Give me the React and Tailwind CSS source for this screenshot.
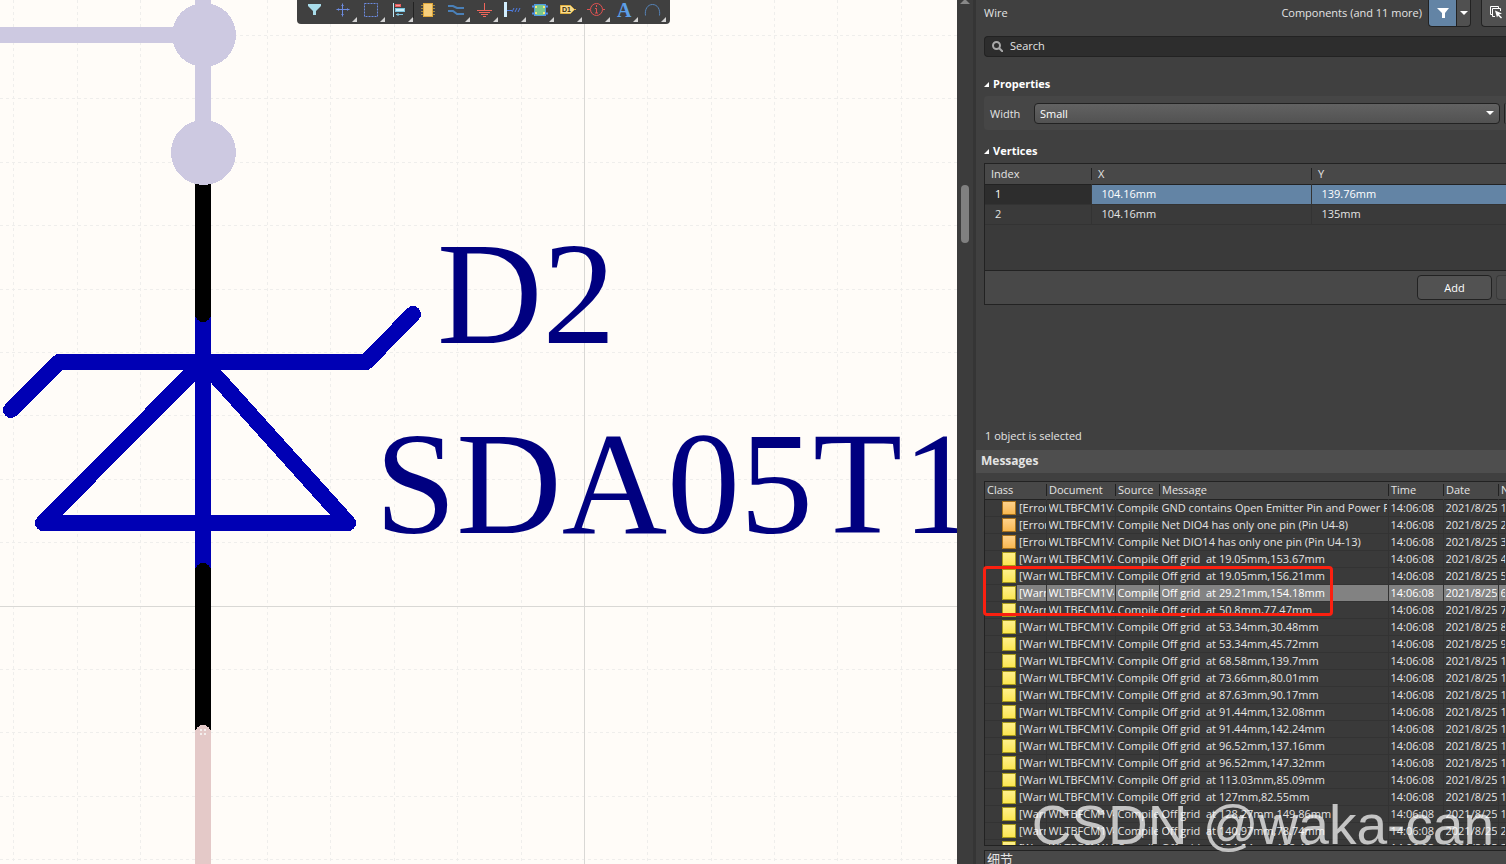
import React from 'react';

const GRID_X = [13, 77, 140, 204, 267, 330, 394, 457, 521, 647, 711, 774, 837, 901];
const GRID_Y = [35, 98, 162, 225, 289, 352, 415, 479, 542, 669, 732, 796, 859];

const VERTICES = [
  { index: 1, x: '104.16mm', y: '139.76mm' },
  { index: 2, x: '104.16mm', y: '135mm' },
];

const ERRORS = [
  'GND contains Open Emitter Pin and Power Pin',
  'Net DIO4 has only one pin (Pin U4-8)',
  'Net DIO14 has only one pin (Pin U4-13)',
];

const OFF_GRID = [
  '19.05mm,153.67mm',
  '19.05mm,156.21mm',
  '29.21mm,154.18mm',
  '50.8mm,77.47mm',
  '53.34mm,30.48mm',
  '53.34mm,45.72mm',
  '68.58mm,139.7mm',
  '73.66mm,80.01mm',
  '87.63mm,90.17mm',
  '91.44mm,132.08mm',
  '91.44mm,142.24mm',
  '96.52mm,137.16mm',
  '96.52mm,147.32mm',
  '113.03mm,85.09mm',
  '127mm,82.55mm',
  '128.27mm,149.86mm',
  '140.97mm,78.74mm',
  '154.94mm,138.43mm',
];

const MESSAGES = [
  ...ERRORS.map((text) => ({ kind: 'error', text })),
  ...OFF_GRID.map((at) => ({ kind: 'warning', text: `Off grid  at ${at}` })),
];

const SELECTED_MESSAGE = 5;

const TOOLS = [
  {
    name: 'Filter',
    icon: <path d="M3 4h13v2l-5 5v4H8v-4L3 6z" fill="#a9dcea" />,
  },
  {
    name: 'Move',
    menu: true,
    icon: (
      <g stroke="#6c8be0" fill="none">
        <path d="M9.500 3.500v13M3.500 9.500h13" />
        <path d="M8 5.500h3M8 14.500h3M5.500 8v3M14.500 8v3" strokeOpacity=".6" />
      </g>
    ),
  },
  {
    name: 'Select area',
    menu: true,
    icon: <rect x="3.500" y="3.500" width="13" height="13" fill="none" stroke="#6c8be0" strokeDasharray="2 1" />,
  },
  {
    name: 'Align',
    menu: true,
    icon: (
      <g>
        <path d="M4.500 3v14" stroke="#c5ecf8" />
        <rect x="6.500" y="4.500" width="5" height="2" fill="#f29a9a" stroke="#e85c5c" />
        <rect x="6.500" y="8.500" width="9" height="3" fill="#c5ecf8" stroke="#7cc4e0" />
        <path d="M7 14.500h7M9 13v3" stroke="#7cc4e0" fill="none" />
      </g>
    ),
  },
  {
    name: 'Place part',
    icon: (
      <g>
        <path d="M3 5.500h14M3 8.500h14M3 11.500h14M3 14.500h14" stroke="#a88a3c" />
        <rect x="5.500" y="3.500" width="9" height="13" fill="#f7cf7c" stroke="#e0a83c" />
      </g>
    ),
  },
  {
    name: 'Place wire',
    menu: true,
    icon: (
      <g fill="none" stroke="#4a80b8" strokeWidth="2">
        <path d="M2 6h5l4 2h7" />
        <path d="M2 11h5l4 3h7" />
      </g>
    ),
  },
  {
    name: 'Place GND power port',
    menu: true,
    icon: (
      <path d="M10.500 3v8M3 10.500h15M5 12.500h11M7 14.500h7M9 16.500h3" stroke="#f0655a" fill="none" />
    ),
  },
  {
    name: 'Place harness',
    menu: true,
    icon: (
      <g fill="none">
        <path d="M3.500 2v15" stroke="#d3efff" strokeWidth="3" />
        <path d="M5 10.500h5M10 12l2-4M13 12l2-4M16 12l2-4" stroke="#4f7fe8" />
      </g>
    ),
  },
  {
    name: 'Place sheet symbol',
    menu: true,
    icon: (
      <g>
        <rect x="4.500" y="4.500" width="11" height="11" fill="#7cc98c" stroke="#4f9be0" />
        <path d="M2 6.500h4M2 13.500h4M14 6.500h4M14 13.500h4" stroke="#4f8fe8" strokeWidth="2" />
        <path d="M5 6h2v2H5zM5 12h2v2H5zM13 6h2v2h-2zM13 12h2v2h-2z" fill="#f5e878" />
      </g>
    ),
  },
  {
    name: 'Place designator',
    menu: true,
    icon: (
      <g>
        <path d="M2.500 5.500h10l4 4-4 4h-10z" fill="#f8dc8e" stroke="#e0b040" />
        <path d="M16 9.500h2" stroke="#e0b040" />
        <text x="4" y="12" fill="#3a2c10" className="font-['Liberation_Sans'] text-[7px] font-bold">D1</text>
      </g>
    ),
  },
  {
    name: 'Place directive',
    menu: true,
    icon: (
      <g fill="none" stroke="#e05252">
        <circle cx="10.500" cy="9.500" r="6" />
        <path d="M1 9.500h3M17 9.500h2" />
        <path d="M10.500 5v2M9 8.500h1.500V13M9 13h3" />
      </g>
    ),
  },
  {
    name: 'Place text',
    menu: true,
    icon: (
      <text x="3" y="17" fill="#5c9fe8" className="font-['Liberation_Serif'] text-[20px] font-bold">A</text>
    ),
  },
  {
    name: 'Place arc',
    menu: true,
    icon: <path d="M3.500 15.500c-1-6 2-11 7-11s8 5 7 11" fill="none" stroke="#5583b8" />,
  },
];

function Toolbar() {
  return (
    <div className="absolute top-0 left-[297px] flex h-6 rounded-b-sm bg-[#404040] px-1">
      {TOOLS.map((tool, i) => (
        <React.Fragment key={tool.name}>
          {i === 4 && <span className="mt-0.5 h-4 w-px bg-[#222]" />}
          <button type="button" aria-label={tool.name} className="relative h-6 w-7 px-1 pb-1">
            <svg width="20" height="20" viewBox="0 0 20 20">
              {tool.icon}
            </svg>
            {tool.menu && (
              <svg className="absolute right-0 bottom-[2px]" width="5" height="5" viewBox="0 0 5 5">
                <path d="M5 0v5H0z" fill="#d4d4d4" />
              </svg>
            )}
          </button>
        </React.Fragment>
      ))}
    </div>
  );
}

function Schematic() {
  return (
    <svg className="block h-full w-full" shapeRendering="crispEdges">
      {/* sheet grid */}
      <g stroke="#efeeec" strokeDasharray="3 3">
        {GRID_X.map((x) => (
          <line key={x} x1={x + 0.5} x2={x + 0.5} y1="0" y2="100%" />
        ))}
        {GRID_Y.map((y) => (
          <line key={y} x1="0" x2="100%" y1={y + 0.5} y2={y + 0.5} />
        ))}
      </g>
      <g stroke="#d9d8d5">
        <line x1="584.500" x2="584.500" y1="0" y2="100%" />
        <line x1="0" x2="100%" y1="606.500" y2="606.500" />
      </g>

      {/* dimmed net and junctions */}
      <g fill="#cdc9e1" stroke="none">
        <rect x="0" y="27" width="203" height="16" />
        <rect x="195" y="0" width="16" height="153" />
        <circle cx="204" cy="35" r="32" />
      </g>

      {/* TVS diode */}
      <g fill="none" stroke="#0000b4" strokeWidth="16" strokeLinecap="round" strokeLinejoin="round">
        <path d="M11 410L59 362H366L413 314" />
        <path d="M203 362L43 523H348Z" />
        <path d="M203 318V568" />
      </g>
      <g stroke="#000" strokeWidth="16" strokeLinecap="round">
        <path d="M203 180V314" />
        <path d="M203 571V724" />
        <path d="M203 700V732" strokeLinecap="butt" />
      </g>
      <circle cx="203.500" cy="152.500" r="32.500" fill="#cdc9e1" />

      <line x1="203" x2="203" y1="733" y2="2000" stroke="#e4c9c8" strokeWidth="16" strokeLinecap="round" />
      <path d="M200 729h2v2h-2zM204 729h2v2h-2zM200 733h2v2h-2zM204 733h2v2h-2z" fill="#f4efee" />

      <g fill="#000080" className="font-['Liberation_Serif',serif] text-[146px]">
        <text x="437" y="343">D2</text>
        <text x="375" y="533">SDA05T1</text>
      </g>
    </svg>
  );
}

function SectionTitle({ children }) {
  return (
    <h2 className="flex h-5 items-center gap-1 font-bold text-white">
      <svg width="5" height="5" viewBox="0 0 5 5">
        <path d="M5 0v5H0z" fill="#fff" />
      </svg>
      {children}
    </h2>
  );
}

function Caret() {
  return (
    <svg width="8" height="4" viewBox="0 0 8 4">
      <path d="M0 0h8L4 4z" fill="#fff" />
    </svg>
  );
}

function PropertiesPanel() {
  return (
    <section className="flex h-[450px] shrink-0 flex-col pl-2">
      <div className="flex h-[26px] shrink-0 items-center">
        <span>Wire</span>
        <span className="ml-auto pr-1.5">Components (and 11 more)</span>
        <button
          type="button"
          aria-label="Filter"
          className="flex h-[27px] w-[29px] items-center justify-center rounded-bl-sm border border-t-0 border-[#222] bg-[#6384a5]"
        >
          <svg width="12" height="10" viewBox="0 0 12 10">
            <path d="M0 0h12L8 5v5H5V5z" fill="#fff" />
          </svg>
        </button>
        <button
          type="button"
          aria-label="Filter options"
          className="flex h-[27px] w-[14px] items-center justify-center rounded-br-sm border border-t-0 border-l-0 border-[#222] bg-[#505050]"
        >
          <Caret />
        </button>
        <button
          type="button"
          aria-label="Select"
          className="ml-[10px] flex h-[27px] w-[25px] items-center rounded-bl-sm border border-t-0 border-r-0 border-[#222] bg-[#505050] pl-2"
        >
          <svg width="13" height="13" viewBox="0 0 13 13" fill="none" stroke="#fff">
            <path d="M2 8.500H.500V.500h8V2" />
            <path d="M5 10.500H2.500v-8h8V5" />
            <path d="M5 4.500l7 3-3 1 3 3-1 1-3-3-1 2z" fill="#fff" stroke="none" />
          </svg>
        </button>
      </div>

      <label className="mt-[10px] flex h-[21px] shrink-0 items-center gap-[7px] rounded-l-sm border border-r-0 border-[#222] bg-[#2d2d2d] pl-[7px]">
        <svg width="11" height="11" viewBox="0 0 11 11" fill="none" stroke="#a8a8a8" strokeWidth="2">
          <circle cx="4.500" cy="4.500" r="3.500" />
          <path d="M7 7l4 4" />
        </svg>
        <input
          type="text"
          aria-label="Search"
          placeholder="Search"
          className="min-w-0 flex-1 bg-transparent pb-0.5 outline-none placeholder:text-[#e4e4e4] placeholder:opacity-100"
        />
      </label>

      <div className="mt-[17px]">
        <SectionTitle>Properties</SectionTitle>
      </div>
      <div className="mt-[2px] flex h-[34px] shrink-0 items-center gap-1 rounded-l-sm bg-[#464646] pl-1.5">
        <label htmlFor="wire-width" className="w-10 pt-0.5">Width</label>
        <div className="relative flex flex-1">
          <select
            id="wire-width"
            defaultValue="Small"
            className="h-[21px] w-full appearance-none rounded-sm border border-[#222] bg-linear-to-b from-[#626262] to-[#525252] px-[5px] pt-0.5 text-white"
          >
            <option>Smallest</option>
            <option>Small</option>
            <option>Medium</option>
            <option>Large</option>
          </select>
          <span className="pointer-events-none absolute top-2 right-1.5">
            <Caret />
          </span>
        </div>
        <button
          type="button"
          aria-label="Wire colour"
          className="h-[21px] w-[2px] rounded-l-sm border-l border-[#222] bg-[#505050]"
        />
      </div>

      <div className="mt-[11px]">
        <SectionTitle>Vertices</SectionTitle>
      </div>
      <div className="mt-[2px] flex h-[142px] shrink-0 flex-col border border-r-0 border-[#222] bg-[#3a3a3a]">
        <table className="w-full table-fixed border-collapse text-left">
          <colgroup>
            <col className="w-[106px]" />
            <col className="w-[220px]" />
            <col />
          </colgroup>
          <thead className="h-5 border-b border-[#222] bg-[#484848]">
            <tr>
              <th className="pl-1.5 font-normal">Index</th>
              <th className="font-normal"><span className="block border-l border-[#222] pl-1.5 leading-3">X</span></th>
              <th className="font-normal"><span className="block border-l border-[#222] pl-1.5 leading-3">Y</span></th>
            </tr>
          </thead>
          <tbody>
            {VERTICES.map((v, i) => (
              <tr
                key={v.index}
                className={`h-5 border-b border-[#333] ${i === 0 ? 'bg-[#6384a5] text-white' : ''}`}
              >
                <td className={i === 0 ? 'bg-[#2d2d2d] pl-[10px]' : 'pl-[10px]'}>{v.index}</td>
                <td className="border-l border-[#333] pl-[10px]">{v.x}</td>
                <td className="border-l border-[#333] pl-[10px]">{v.y}</td>
              </tr>
            ))}
          </tbody>
        </table>
        <div className="mt-auto flex h-[34px] items-center justify-end gap-1 border-t border-[#222] bg-[#484848]">
          <button type="button" className="h-[25px] w-[75px] rounded-sm border border-[#222] bg-[#525252] text-white">
            Add
          </button>
          <button
            type="button"
            disabled
            aria-label="Remove"
            className="h-[25px] w-[10px] rounded-l-sm border border-r-0 border-[#3a3a3a] bg-[#4b4b4b]"
          />
        </div>
      </div>

      <p className="mt-auto mb-1.5 pl-px">1 object is selected</p>
    </section>
  );
}

function Heading({ children }) {
  return (
    <th className="p-0 font-normal">
      <span className="block overflow-hidden border-l border-[#222] pl-[2px] leading-3">{children}</span>
    </th>
  );
}

function Cell({ children }) {
  return (
    <td className="overflow-hidden border-l border-[#333] p-0 pr-px pl-[2px] whitespace-pre">
      <span className="block overflow-hidden">{children}</span>
    </td>
  );
}

function MessagesPanel() {
  return (
    <section className="flex min-h-0 flex-1 flex-col">
      <h2 className="h-[23px] shrink-0 bg-[#4e4e4e] pl-[5px] text-[12px] leading-[22px] font-bold">Messages</h2>

      <div className="relative mt-2 ml-2 h-[365px] shrink-0">
        <div className="h-full overflow-hidden border border-r-0 border-[#222] bg-[#3a3a3a]">
          <table className="w-full table-fixed border-collapse text-left leading-4">
            <colgroup>
              <col className="w-[61px]" />
              <col className="w-[69px]" />
              <col className="w-[44px]" />
              <col className="w-[229px]" />
              <col className="w-[55px]" />
              <col className="w-[55px]" />
              <col />
            </colgroup>
            <thead className="h-[17px] border-b border-[#222] bg-[#484848]">
              <tr>
                <th className="p-0 pl-[2px] font-normal">Class</th>
                <Heading>Document</Heading>
                <Heading>Source</Heading>
                <Heading>Message</Heading>
                <Heading>Time</Heading>
                <Heading>Date</Heading>
                <Heading>No.</Heading>
              </tr>
            </thead>
            <tbody>
              {MESSAGES.map((m, i) => (
                <tr
                  key={m.text}
                  className={`h-[17px] border-b border-[#333] ${i === SELECTED_MESSAGE ? 'bg-[#828282] text-white' : ''}`}
                >
                  <td className="p-0">
                    <div className={`flex h-4 overflow-hidden ${i === SELECTED_MESSAGE ? 'bg-linear-to-r from-[#3a3a3a] from-[32px] to-transparent to-[32px]' : ''}`}>
                      <span
                        className={`mt-px ml-[17px] h-[14px] w-[14px] shrink-0 border ${
                          m.kind === 'error'
                            ? 'border-[#a8711c] bg-linear-to-b from-[#ffd28a] to-[#f8b850]'
                            : 'border-[#a89a1c] bg-linear-to-b from-[#fff08a] to-[#fbe650]'
                        }`}
                      />
                      <span className="ml-[3px] min-w-0 flex-1 overflow-hidden">
                        {m.kind === 'error' ? '[Error]' : '[Warning]'}
                      </span>
                    </div>
                  </td>
                  <Cell>WLTBFCM1V4.0</Cell>
                  <Cell>Compiler</Cell>
                  <Cell>{m.text}</Cell>
                  <Cell>14:06:08</Cell>
                  <Cell>2021/8/25</Cell>
                  <Cell>{i + 1}</Cell>
                </tr>
              ))}
            </tbody>
          </table>
        </div>
        {/* highlight drawn over the off-grid warnings */}
        <div className="absolute top-[85px] left-[-1px] h-[50px] w-[350px] rounded border-3 border-[#fb2010]" />
      </div>

      <div className="mt-1 ml-2 min-h-[14px] flex-1 overflow-hidden border border-r-0 border-b-0 border-[#222] bg-[#484848] pl-[2px] text-[13px] leading-4">
        细节
      </div>
    </section>
  );
}

export default function App() {
  return (
    <div className="relative flex h-screen overflow-hidden bg-[#404040] font-['Open_Sans','Noto_Sans_CJK_SC',sans-serif] text-[11px] leading-4 text-[#e4e4e4]">
      <main className="relative min-w-0 flex-1 overflow-hidden bg-[#fffcf8]">
        <Schematic />
        <Toolbar />
      </main>

      <div className="flex w-[19px] shrink-0 flex-col items-center border-r-3 border-[#353535] bg-[#3c3c3c]">
        <svg width="10" height="4" viewBox="0 0 10 4">
          <path d="M4 0h2l4 4H0z" fill="#888" />
        </svg>
        <span className="mt-[181px] h-[58px] w-2 rounded-full bg-[#808080]" />
      </div>

      <aside className="flex w-[530px] shrink-0 flex-col overflow-hidden">
        <PropertiesPanel />
        <MessagesPanel />
      </aside>

      <p className="pointer-events-none absolute right-3 bottom-3 font-['Liberation_Sans',sans-serif] text-[55px] leading-[54px] whitespace-nowrap text-white/70">
        CSDN @waka-can
      </p>
    </div>
  );
}
